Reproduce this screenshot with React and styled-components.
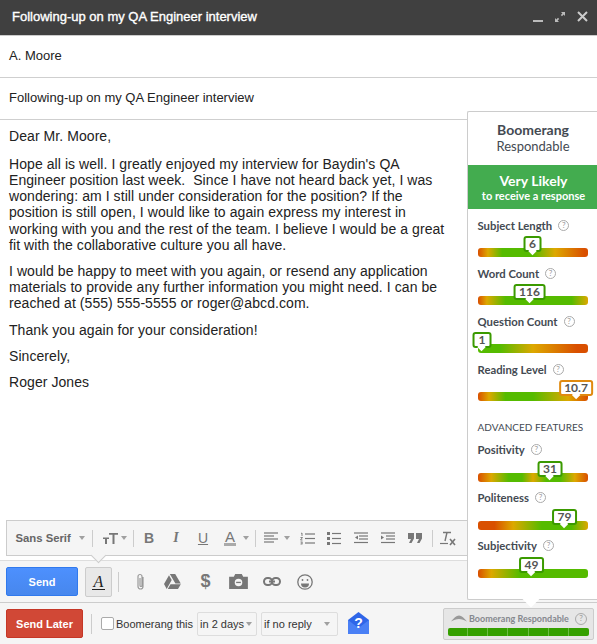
import React from 'react';
import styled, { createGlobalStyle } from 'styled-components';

const Global = createGlobalStyle`
  html, body { margin: 0; padding: 0; background: #fff; }
  * { box-sizing: border-box; }
`;

const Window = styled.div`
  position: relative;
  width: 597px;
  height: 644px;
  overflow: hidden;
  display: flex;
  flex-direction: column;
  font-family: "Liberation Sans", Arial, sans-serif;
  color: #222;
`;

const Header = styled.div`
  height: 36px;
  flex: none;
  background: #404040;
  border-bottom: 1px solid #ccc;
  display: flex;
  align-items: center;
  justify-content: space-between;
  padding: 0 9px 2px 12px;
  color: #fff;
  font-size: 13px;
  -webkit-text-stroke: 0.35px #fff;
`;

const HeaderIcons = styled.div`
  display: flex;
  align-items: center;
  gap: 11px;
`;

const FieldRow = styled.div`
  height: 42px;
  flex: none;
  border-bottom: 1px solid #cfcfcf;
  display: flex;
  align-items: center;
  padding: 0 9px 2px;
  font-size: 13px;
`;

const Body = styled.div`
  flex: 1;
  min-height: 0;
  padding: 8px 9px 0;
  font-size: 14px;
  line-height: 16.2px;
  letter-spacing: 0.07px;
  display: flex;
  flex-direction: column;
  color: #222;
`;

const Para = styled.p`
  margin: 0 0 ${(p) => p.$after || 10}px;
  width: 450px;
  white-space: pre-wrap;
`;

const Format = styled.div`
  position: relative;
  margin: auto 0 4px -3px;
  width: 600px;
  height: 36px;
  flex: none;
  background: #f5f5f5;
  border: 1.5px solid #ccc;
  display: flex;
  align-items: center;
  letter-spacing: 0;
  color: #666;

  &::after {
    content: "";
    position: absolute;
    left: 86px;
    bottom: -6px;
    width: 10px;
    height: 10px;
    background: #f5f5f5;
    border-right: 1px solid #ccc;
    border-bottom: 1px solid #ccc;
    transform: rotate(45deg);
  }
`;

const FontName = styled.span`
  font-size: 11.3px;
  font-weight: bold;
  color: #666;
  margin-left: 8.5px;
  width: 60px;
  flex: none;
`;

const Sep = styled.span`
  width: 1px;
  height: ${(p) => p.$h || 17}px;
  background: #ccc;
  flex: none;
  margin: ${(p) => p.$margin || '0'};
`;

const Caret = styled.span`
  width: 0;
  height: 0;
  flex: none;
  border-left: 3.5px solid transparent;
  border-right: 3.5px solid transparent;
  border-top: 4px solid #a0a0a0;
  margin: ${(p) => p.$margin || '0'};
`;

const Tool = styled.span`
  width: ${(p) => p.$w || 27}px;
  flex: none;
  display: flex;
  align-items: center;
  justify-content: center;
`;

const Letter = styled.span`
  font-family: ${(p) => (p.$italic ? '"Liberation Serif"' : '"Liberation Sans"')}, serif;
  font-size: ${(p) => p.$size || 14}px;
  font-weight: ${(p) => (p.$thin ? 'normal' : 'bold')};
  font-style: ${(p) => (p.$italic ? 'italic' : 'normal')};
  text-decoration: ${(p) => (p.$under ? 'underline' : 'none')};
  color: #777;
`;

const ColorA = styled.span`
  font-size: 15px;
  line-height: 13px;
  color: #777;
  border-bottom: 3px solid #aaa;
  padding: 0 1px;
`;

const ToolRow = styled.div`
  height: 43px;
  flex: none;
  background: #f5f5f5;
  border-top: 1px solid #ddd;
  border-bottom: 1px solid #ccc;
  display: flex;
  align-items: center;
  padding: 0 0 0 6px;
`;

const LaterRow = styled.div`
  height: 41px;
  flex: none;
  background: #f5f5f5;
  display: flex;
  align-items: center;
  padding: 0 0 0 6px;
  font-size: 11px;
  color: #333;
`;

const SendButton = styled.div`
  width: 72px;
  height: 29px;
  flex: none;
  border-radius: 2px;
  background: linear-gradient(#4d90fe, #4787ed);
  border: 1px solid #3079ed;
  color: #fff;
  font-size: 11px;
  font-weight: bold;
  display: flex;
  align-items: center;
  justify-content: center;
`;

const TextFormat = styled.div`
  width: 27px;
  height: 30px;
  flex: none;
  margin-left: 7px;
  background: #e8e8e8;
  border: 1px solid #ccc;
  border-radius: 2px;
  display: flex;
  align-items: center;
  justify-content: center;
  font-family: "Liberation Serif", serif;
  font-style: italic;
  font-size: 16px;
  color: #222;
`;

const UnderA = styled.span`
  border-bottom: 1px solid #222;
  line-height: 15px;
  padding: 0 2px;
`;

const Attach = styled.span`
  width: 33px;
  flex: none;
  display: flex;
  justify-content: center;
  color: #777;
`;

const LaterButton = styled.div`
  width: 77px;
  height: 29px;
  flex: none;
  border-radius: 2px;
  background: #d14836;
  border: 1px solid #c53727;
  color: #fff;
  font-size: 11px;
  font-weight: bold;
  display: flex;
  align-items: center;
  justify-content: center;
`;

const Check = styled.span`
  width: 13px;
  height: 13px;
  flex: none;
  background: #fff;
  border: 1px solid #aaa;
  border-radius: 2px;
  margin: 0 2px 0 1px;
`;

const Select = styled.div`
  width: ${(p) => p.$w}px;
  height: 24px;
  flex: none;
  margin-left: 4px;
  background: #f5f5f5;
  border: 1px solid #ddd;
  border-radius: 2px;
  display: flex;
  align-items: center;
  justify-content: space-between;
  padding: ${(p) => p.$pad};
  font-size: 11px;
  color: #333;
  white-space: nowrap;
`;

const Widget = styled.div`
  position: absolute;
  left: 443px;
  top: 608px;
  width: 151px;
  height: 32px;
  background: #e6e6e6;
  border: 1px solid #ccc;
  border-radius: 2px;
  padding: 3px 4px;
  display: flex;
  flex-direction: column;
  gap: 3px;
`;

const WidgetTop = styled.div`
  display: flex;
  align-items: center;
  height: 13px;
  padding: 0 2px 0 3px;
  font-family: Lato, sans-serif;
  font-size: 9px;
  font-weight: bold;
  color: #85888e;
  white-space: nowrap;
`;

const WidgetLabel = styled.span`
  margin-left: 2px;
  flex: 1;
`;

const WidgetBar = styled.div`
  height: 8px;
  background: #35a000;
  border-radius: 2px;
  display: grid;
  grid-template-columns: repeat(7, 1fr);
`;

const Seg = styled.span`
  border-right: 1px solid #6cbd47;
  &:last-child { border-right: 0; }
`;

const Panel = styled.div`
  position: absolute;
  left: 467px;
  top: 111px;
  width: 132px;
  height: 489px;
  background: #fff;
  border: 1.5px solid #ccc;
  border-right: 0;
  border-radius: 2px 0 0 2px;
  font-family: Lato, sans-serif;
  color: #444a52;

  &::after {
    content: "";
    position: absolute;
    left: 57px;
    bottom: -6px;
    width: 12px;
    height: 12px;
    background: #fff;
    transform: rotate(45deg);
  }
`;

const Brand = styled.div`
  text-align: center;
  padding: 9px 1px 0 0;
  height: 53px;
  font-size: 13px;
  line-height: 17px;
`;

const BrandStrong = styled.div`
  font-size: 14px;
  font-weight: bold;
`;

const Likely = styled.div`
  height: 44px;
  background: #43ac4f;
  color: #fff;
  text-align: center;
  padding: 7px 0 0 0;
  font-weight: bold;
`;

const LikelyBig = styled.div`
  font-size: 14px;
  line-height: 17px;
`;

const LikelySmall = styled.div`
  font-size: 11px;
  line-height: 13px;
`;

const Metrics = styled.div`
  padding: 6px 9px 0 9.5px;
`;

const Metric = styled.div`
  height: 48px;
`;

const MetricLabel = styled.div`
  height: 20px;
  display: flex;
  align-items: center;
  gap: 6px;
  font-size: 11.3px;
  font-weight: bold;
  color: #444a52;
`;

const Track = styled.div`
  position: relative;
  width: 110px;
  height: 9px;
  margin-top: 13px;
  border-radius: 3px;
  background: ${(p) => p.$fill};
`;

const Bubble = styled.div`
  position: absolute;
  left: ${(p) => p.$at}px;
  bottom: 5px;
  transform: translateX(-50%);
  height: 16px;
  padding: 0 ${(p) => p.$pad}px;
  background: #fff;
  border: 2px solid ${(p) => p.$tone};
  border-radius: 3px;
  font-size: 12px;
  font-weight: bold;
  line-height: 12px;
  color: #555;
  white-space: nowrap;

  &::after {
    content: "";
    position: absolute;
    z-index: -1;
    left: 50%;
    bottom: -4px;
    width: 6px;
    height: 6px;
    margin-left: -3px;
    background: #fff;
    transform: rotate(45deg);
  }
`;

const Advanced = styled.div`
  height: 32.5px;
  padding-top: 14px;
  font-size: 10px;
  line-height: 12px;
  color: #444a52;
  white-space: nowrap;
`;

const HelpMark = styled.span`
  width: ${(p) => p.$size || 11}px;
  height: ${(p) => p.$size || 11}px;
  flex: none;
  border: 1px solid #aaa;
  border-radius: 50%;
  font-size: 8px;
  line-height: 9px;
  text-align: center;
  color: #999;
  font-weight: normal;
`;

const G = '#55bb00';
const Y = '#dda800';
const R = '#d94f00';

const metrics = [
  { label: 'Subject Length', value: '6', at: 55, pad: 4, tone: '#3b9a00', fill: `linear-gradient(90deg, ${R}, ${Y} 9%, ${G} 22%, ${G} 50%, ${Y} 70%, ${R} 97%)` },
  { label: 'Word Count', value: '116', at: 52, pad: 4, tone: '#3b9a00', fill: `linear-gradient(90deg, ${R}, ${Y} 8%, ${G} 25%, ${G} 85%, ${Y} 100%)` },
  { label: 'Question Count', value: '1', at: 4.5, pad: 4, tone: '#3b9a00', fill: `linear-gradient(90deg, ${G}, ${G} 20%, ${Y} 50%, ${R} 90%)` },
  { label: 'Reading Level', value: '10.7', at: 98.5, pad: 3, tone: '#e08a10', fill: `linear-gradient(90deg, ${R}, ${Y} 10%, ${G} 25%, ${G} 50%, ${Y} 82%, ${R} 100%)` },
];

const advanced = [
  { label: 'Positivity', value: '31', at: 72.5, pad: 3.5, tone: '#3b9a00', fill: `linear-gradient(90deg, ${R}, ${Y} 12%, ${G} 28%, ${G} 40%, ${Y} 50%, ${G} 62%, ${G} 75%, ${Y} 88%, ${R} 100%)` },
  { label: 'Politeness', value: '79', at: 87, pad: 4, tone: '#3b9a00', fill: `linear-gradient(90deg, ${R}, ${R} 15%, ${Y} 32%, ${G} 58%, ${G} 85%, ${Y} 100%)` },
  { label: 'Subjectivity', value: '49', at: 54, pad: 4, tone: '#3b9a00', fill: `linear-gradient(90deg, ${R}, ${Y} 12%, ${G} 38%, ${G} 100%)` },
];

function MetricRow({ label, value, at, pad, tone, fill }) {
  return (
    <Metric>
      <MetricLabel>
        {label}
        <HelpMark>?</HelpMark>
      </MetricLabel>
      <Track $fill={fill}>
        <Bubble $at={at} $pad={pad} $tone={tone}>{value}</Bubble>
      </Track>
    </Metric>
  );
}

function Lines({ rows, stroke = '#777' }) {
  return rows.map(([y, a, b]) => (
    <line key={y + '' + a} x1={a} x2={b} y1={y} y2={y} stroke={stroke} strokeWidth="1.2" />
  ));
}

function App() {
  return (
    <Window>
      <Global />
      <Header>
        Following-up on my QA Engineer interview
        <HeaderIcons>
          <svg width="10" height="12" viewBox="0 0 10 12"><rect x="0" y="9" width="10" height="2" fill="#bbb" /></svg>
          <svg width="12" height="12" viewBox="0 0 12 12" fill="#bbb">
            <path d="M7 1h4v4L9.6 3.6 8 5.2 6.8 4 8.400 2.400z" />
            <path d="M5 11H1V7l1.400 1.400L4 6.800 5.200 8 3.600 9.600z" />
          </svg>
          <svg width="11" height="11" viewBox="0 0 11 11" stroke="#ccc" strokeWidth="2"><path d="M1 1l9 9M10 1l-9 9" /></svg>
        </HeaderIcons>
      </Header>
      <FieldRow>A. Moore</FieldRow>
      <FieldRow>Following-up on my QA Engineer interview</FieldRow>
      <Body>
        <Para $after={11.500}>Dear Mr. Moore,</Para>
        <Para>{`Hope all is well. I greatly enjoyed my interview for Baydin's QA
Engineer position last week.  Since I have not heard back yet, I was
wondering: am I still under consideration for the position? If the
position is still open, I would like to again express my interest in
working with you and the rest of the team. I believe I would be a great
fit with the collaborative culture you all have.`}</Para>
        <Para>{`I would be happy to meet with you again, or resend any application
materials to provide any further information you might need. I can be
reached at (555) 555-5555 or roger@abcd.com.`}</Para>
        <Para>Thank you again for your consideration!</Para>
        <Para>Sincerely,</Para>
        <Para>Roger Jones</Para>
        <Format>
          <FontName>Sans Serif</FontName>
          <Caret $margin="0 0 0 3px" />
          <Sep $margin="0 0 0 7.5px" />
          <Tool $w={34}>
            <svg width="15" height="11" viewBox="0 0 15 11" fill="#777"><path d="M6 0h9v1.800h-3.500V11H9.500V1.800H6zM0 4.500h6V6H4v5H2V6H0z" /></svg>
          </Tool>
          <Caret $margin="0 0 0 -6.500px" />
          <Sep $margin="0 0 0 6.500px" />
          <Tool $w={30}><Letter>B</Letter></Tool>
          <Tool $w={24}><Letter $italic>I</Letter></Tool>
          <Tool $w={30}><Letter $thin $under>U</Letter></Tool>
          <Tool $w={24}><ColorA>A</ColorA></Tool>
          <Caret $margin="0 0 0 .5px" />
          <Sep $margin="0 0 0 6.500px" />
          <Tool $w={30}>
            <svg width="14" height="12" viewBox="0 0 14 12"><Lines rows={[[1, 0, 14], [4, 0, 10], [7, 0, 14], [10, 0, 10]]} /></svg>
          </Tool>
          <Caret $margin="0 4px 0 -2.500px" />
          <Tool>
            <svg width="15" height="13" viewBox="0 0 15 13"><Lines rows={[[2, 5, 15], [6.500, 5, 15], [11, 5, 15]]} /><path d="M1 1.500L2 1v3M.5 5.500h2L.5 8h2M.5 10h2l-1 1 1 1h-2" stroke="#777" fill="none" strokeWidth=".9" /></svg>
          </Tool>
          <Tool>
            <svg width="14" height="13" viewBox="0 0 14 13" fill="#777"><rect x="0" y="0" width="3" height="3" /><rect x="0" y="5" width="3" height="3" /><rect x="0" y="10" width="3" height="3" /><Lines rows={[[1.500, 5, 14], [6.500, 5, 14], [11.500, 5, 14]]} /></svg>
          </Tool>
          <Tool>
            <svg width="14" height="12" viewBox="0 0 14 12" fill="#777"><Lines rows={[[1, 0, 14], [4, 5, 14], [7, 5, 14], [10.500, 0, 14]]} /><path d="M4 3.500v4L1 5.500z" /></svg>
          </Tool>
          <Tool>
            <svg width="14" height="12" viewBox="0 0 14 12" fill="#777"><Lines rows={[[1, 0, 14], [4, 5, 14], [7, 5, 14], [10.500, 0, 14]]} /><path d="M0 3.500v4l3-2z" /></svg>
          </Tool>
          <Tool>
            <svg width="14" height="10" viewBox="0 0 14 10" fill="#777"><path d="M0 0h6v5.500L3.500 10H1l2-4H0zM8 0h6v5.500L11.500 10H9l2-4H8z" /></svg>
          </Tool>
          <Sep $margin="0 0 0 3.500px" />
          <Tool $w={29}>
            <svg width="16" height="15" viewBox="0 0 16 15"><path d="M3 1.500h8M7 1.500L5 10" stroke="#777" strokeWidth="1.400" fill="none" /><path d="M0 12.500h8" stroke="#777" strokeWidth="1.200" /><path d="M10 8l5 6M15 8l-5 6" stroke="#777" strokeWidth="1.600" /></svg>
          </Tool>
        </Format>
      </Body>
      <ToolRow>
        <SendButton>Send</SendButton>
        <TextFormat><UnderA>A</UnderA></TextFormat>
        <Sep $h={20} $margin="0 4px 0 6px" />
        <Attach>
          <svg width="10" height="18" viewBox="0 0 10 18" fill="none" stroke="#999" strokeWidth="1.200"><path d="M7.500 4v9.500a2.500 2.500 0 0 1-5 0V3.500a2 2 0 0 1 4 0v9a1 1 0 0 1-2 0V5" transform="translate(.5 0)" /></svg>
        </Attach>
        <Attach>
          <svg width="17" height="15" viewBox="0 0 17 15" fill="#777"><path d="M5.800 0h5.400l5.600 9.500h-5.400zM5 1.200l2.700 4.700L2.700 15 0 10zM3.800 15l2.700-4.800h10.300L14 15z" /></svg>
        </Attach>
        <Attach>
          <Letter $size={18}>$</Letter>
        </Attach>
        <Attach>
          <svg width="19" height="15" viewBox="0 0 20 16" fill="#777"><path d="M0 3h5l1.500-3h7L15 3h5v13H0z" /><circle cx="10" cy="9" r="4" fill="#f5f5f5" /><rect x="7.500" y="8.300" width="5" height="1.400" fill="#777" /></svg>
        </Attach>
        <Attach>
          <svg width="18" height="9" viewBox="0 0 18 9" fill="none" stroke="#777" strokeWidth="2"><rect x="1" y="1" width="8" height="7" rx="3.500" /><rect x="9" y="1" width="8" height="7" rx="3.500" /><path d="M6 4.500h6" /></svg>
        </Attach>
        <Attach>
          <svg width="16" height="16" viewBox="0 0 16 16" fill="none" stroke="#777" strokeWidth="1.300"><circle cx="8" cy="8" r="7.200" /><circle cx="5.500" cy="6" r=".9" fill="#777" stroke="none" /><circle cx="10.500" cy="6" r=".9" fill="#777" stroke="none" /><path d="M4 9.500h8a4 4 0 0 1-8 0z" fill="#777" stroke="none" /></svg>
        </Attach>
      </ToolRow>
      <LaterRow>
        <LaterButton>Send Later</LaterButton>
        <Sep $h={20} $margin="0 8px 0 8px" />
        <Check />
        Boomerang this
        <Select $w={60} $pad="0 4px 0 2px">in 2 days<Caret /></Select>
        <Select $w={77} $pad="0 7px 0 2px">if no reply<Caret /></Select>
        <svg style={{ marginLeft: 10, marginBottom: 2 }} width="21" height="22" viewBox="0 0 21 22">
          <path d="M10.500 0L21 8v14H0V8z" fill="#2f66e8" />
          <path d="M0 8l10.500 8L21 8v14H0z" fill="#4a80f5" />
          <text x="10.500" y="16" textAnchor="middle" fontSize="14" fontWeight="bold" fontFamily="Liberation Sans" fill="#fff">?</text>
        </svg>
      </LaterRow>
      <Widget>
        <WidgetTop>
          <svg width="16" height="7" viewBox="0 0 18 7" fill="#999"><path d="M0 7c3-4 6-7 9-7s6 3 9 7c-3-2-6-3-9-3S3 5 0 7z" /></svg>
          <WidgetLabel>Boomerang Respondable</WidgetLabel>
          <HelpMark $size={12}>?</HelpMark>
        </WidgetTop>
        <WidgetBar>
          <Seg /><Seg /><Seg /><Seg /><Seg /><Seg /><Seg />
        </WidgetBar>
      </Widget>
      <Panel>
        <Brand>
          <BrandStrong>Boomerang</BrandStrong>
          Respondable
        </Brand>
        <Likely>
          <LikelyBig>Very Likely</LikelyBig>
          <LikelySmall>to receive a response</LikelySmall>
        </Likely>
        <Metrics>
          {metrics.map((m) => <MetricRow key={m.label} {...m} />)}
          <Advanced>ADVANCED FEATURES</Advanced>
          {advanced.map((m) => <MetricRow key={m.label} {...m} />)}
        </Metrics>
      </Panel>
    </Window>
  );
}

export default App;
